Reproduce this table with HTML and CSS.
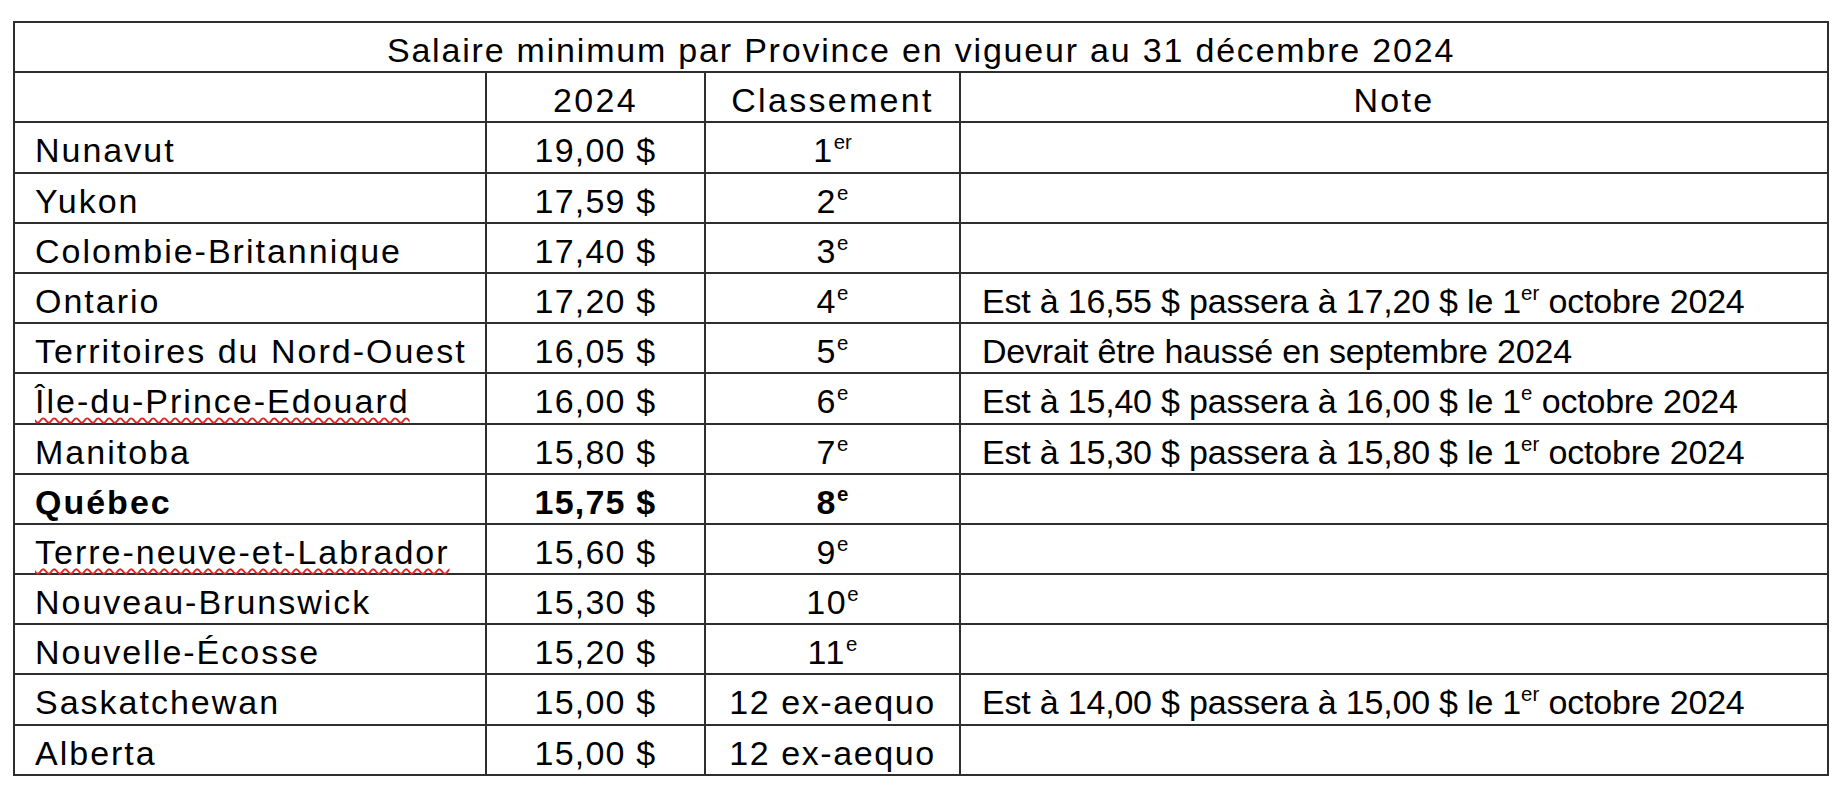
FILE: index.html
```html
<!DOCTYPE html>
<html lang="fr">
<head>
<meta charset="utf-8">
<title>Salaire minimum par Province</title>
<link rel="stylesheet" href="styles.css">
</head>
<body>
<table class="wage-table">
  <colgroup>
    <col class="c-prov">
    <col class="c-wage">
    <col class="c-rank">
    <col class="c-note">
  </colgroup>
  <thead>
    <tr>
      <th colspan="4" class="title">Salaire minimum par Province en vigueur au 31 décembre 2024</th>
    </tr>
    <tr>
      <th></th>
      <th class="center">2024</th>
      <th class="center">Classement</th>
      <th class="center">Note</th>
    </tr>
  </thead>
  <tbody>
    <tr><td class="prov">Nunavut</td><td class="wage">19,00 $</td><td class="rank">1<sup>er</sup></td><td class="note"></td></tr>
    <tr><td class="prov">Yukon</td><td class="wage">17,59 $</td><td class="rank">2<sup>e</sup></td><td class="note"></td></tr>
    <tr><td class="prov">Colombie-Britannique</td><td class="wage">17,40 $</td><td class="rank">3<sup>e</sup></td><td class="note"></td></tr>
    <tr><td class="prov">Ontario</td><td class="wage">17,20 $</td><td class="rank">4<sup>e</sup></td><td class="note">Est à 16,55 $ passera à 17,20 $ le 1<sup>er</sup> octobre 2024</td></tr>
    <tr><td class="prov">Territoires du Nord-Ouest</td><td class="wage">16,05 $</td><td class="rank">5<sup>e</sup></td><td class="note">Devrait être haussé en septembre 2024</td></tr>
    <tr><td class="prov"><span class="spell">Île-du-Prince-Edouard</span></td><td class="wage">16,00 $</td><td class="rank">6<sup>e</sup></td><td class="note">Est à 15,40 $ passera à 16,00 $ le 1<sup>e</sup> octobre 2024</td></tr>
    <tr><td class="prov">Manitoba</td><td class="wage">15,80 $</td><td class="rank">7<sup>e</sup></td><td class="note">Est à 15,30 $ passera à 15,80 $ le 1<sup>er</sup> octobre 2024</td></tr>
    <tr class="highlight"><td class="prov">Québec</td><td class="wage">15,75 $</td><td class="rank">8<sup>e</sup></td><td class="note"></td></tr>
    <tr><td class="prov"><span class="spell">Terre-neuve-et-Labrador</span></td><td class="wage">15,60 $</td><td class="rank">9<sup>e</sup></td><td class="note"></td></tr>
    <tr><td class="prov">Nouveau-Brunswick</td><td class="wage">15,30 $</td><td class="rank">10<sup>e</sup></td><td class="note"></td></tr>
    <tr><td class="prov">Nouvelle-Écosse</td><td class="wage">15,20 $</td><td class="rank">11<sup>e</sup></td><td class="note"></td></tr>
    <tr><td class="prov">Saskatchewan</td><td class="wage">15,00 $</td><td class="rank">12 ex-aequo</td><td class="note">Est à 14,00 $ passera à 15,00 $ le 1<sup>er</sup> octobre 2024</td></tr>
    <tr><td class="prov">Alberta</td><td class="wage">15,00 $</td><td class="rank">12 ex-aequo</td><td class="note"></td></tr>
  </tbody>
</table>
</body>
</html>
```
FILE: styles.css
```css
html, body {
  margin: 0;
  padding: 0;
  background: #ffffff;
}

body {
  padding: 21px 0 0 13px;
  font-family: "Liberation Sans", Arial, sans-serif;
  color: #000000;
}

.wage-table {
  border-collapse: collapse;
  table-layout: fixed;
  width: 1814px;
  font-size: 34px;
}

.c-prov { width: 472px; }
.c-wage { width: 219px; }
.c-rank { width: 255px; }
.c-note { width: 868px; }

.wage-table tr {
  height: 50.2px;
}

.wage-table th,
.wage-table td {
  border: 2px solid #2e2e2e;
  padding: 6px 0 0 20px;
  line-height: 42px;
  vertical-align: top;
  font-weight: normal;
  white-space: nowrap;
  letter-spacing: 2px;
  text-align: left;
}

.wage-table th.title {
  text-align: center;
  padding-left: 0;
  letter-spacing: 1.8px;
}

.wage-table th.center {
  text-align: center;
  padding-left: 0;
  letter-spacing: 2.3px;
}

.wage-table td.wage {
  text-align: center;
  padding-left: 0;
  letter-spacing: 1.2px;
}

.wage-table td.rank {
  text-align: center;
  padding-left: 0;
  letter-spacing: 1.6px;
}

.wage-table td.note {
  letter-spacing: -0.2px;
  padding-left: 21px;
}

.wage-table sup {
  font-size: 0.6em;
  line-height: 0;
  vertical-align: 0.62em;
  letter-spacing: 0;
}

.highlight td {
  font-weight: bold;
}

.spell {
  text-decoration: underline wavy #e02424;
  text-decoration-thickness: 1.5px;
  text-underline-offset: 4px;
  text-decoration-skip-ink: none;
}
```
